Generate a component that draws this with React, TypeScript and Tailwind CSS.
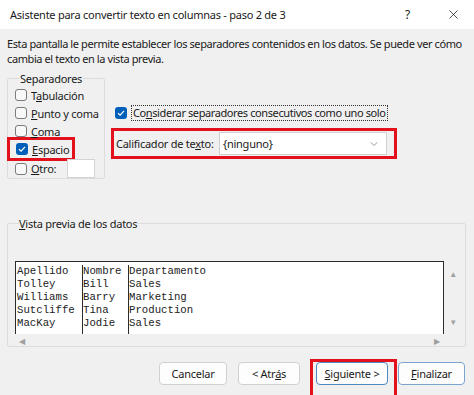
import { ChevronDown, X } from 'lucide-react';

const ui = { fontFamily: '"Segoe UI", "Noto Sans", sans-serif' };
const mono = { fontFamily: '"Liberation Mono", "Courier New", monospace' };

function Box({ checked }: { checked?: boolean }) {
  if (checked) {
    return (
      <span className="flex h-[12px] w-[12px] shrink-0 items-center justify-center rounded-[3px] bg-[#005fb8]">
        <svg width="8" height="8" viewBox="0 0 8 8" fill="none">
          <path d="M1 4.2 L3.1 6.2 L7 1.8" stroke="white" strokeWidth="1.2" />
        </svg>
      </span>
    );
  }
  return <span className="h-[12px] w-[12px] shrink-0 rounded-[3px] border border-[#7a7a7a] bg-[#f8f8f8]" />;
}

function Opt({ pre, key1, post, checked }: { pre?: string; key1: string; post: string; checked?: boolean }) {
  return (
    <div className="flex h-[18px] items-center gap-[4px]">
      <Box checked={checked} />
      <span className="whitespace-nowrap">
        {pre}
        <u>{key1}</u>
        {post}
      </span>
    </div>
  );
}

const rows = [
  ['Apellido', 'Nombre', 'Departamento'],
  ['Tolley', 'Bill', 'Sales'],
  ['Williams', 'Barry', 'Marketing'],
  ['Sutcliffe', 'Tina', 'Production'],
  ['MacKay', 'Jodie', 'Sales'],
];

export default function App() {
  return (
    <div
      className="h-[395px] w-[474px] overflow-hidden bg-[#f0f0f0] text-[11px] leading-[15px] tracking-[-0.25px] text-[#1a1a1a]"
      style={ui}
    >
      {/* Barra de título */}
      <div className="flex h-[29px] items-center bg-white pl-[10px] pr-[13px]">
        <span className="flex-1 whitespace-nowrap">Asistente para convertir texto en columnas - paso 2 de 3</span>
        <span className="mr-[36px] text-[12px]">?</span>
        <X size={15} strokeWidth={1.2} />
      </div>

      <div className="px-[7px]">
        <p className="whitespace-nowrap pt-[7px] tracking-[-0.4px]">
          Esta pantalla le permite establecer los separadores contenidos en los datos. Se puede ver cómo
          <br />
          cambia el texto en la vista previa.
        </p>

        {/* Separadores y opciones */}
        <div className="mt-[5px] flex">
          <fieldset className="h-[108px] w-[98px] rounded-[2px] border border-[#dcdcdc] pl-[7px]">
            <legend className="ml-[4px] px-[1px]">Separadores</legend>
            <Opt pre="T" key1="a" post="bulación" />
            <Opt key1="P" post="unto y coma" />
            <Opt key1="C" post="oma" />
            <div className="-my-[3px] -ml-[8px] w-[68px] border-[3px] border-[#e3111b] pl-[6px]">
              <Opt key1="E" post="spacio" checked />
            </div>
            <div className="mt-[1px] flex items-center">
              <Opt key1="O" post="tro:" />
              <span className="ml-[11px] h-[19px] w-[28px] border border-[#d4d4d4] bg-white" />
            </div>
          </fieldset>

          <div className="ml-[6px] pt-[34px]">
            <div className="ml-[4px] flex items-center gap-[4px]">
              <Box checked />
              <span className="whitespace-nowrap border border-dotted border-[#333] px-[1px] leading-[14px] tracking-[-0.4px]">
                Co<u>n</u>siderar separadores consecutivos como uno solo
              </span>
            </div>
            <div className="mt-[7px] flex h-[31px] w-[286px] items-center border-[3px] border-[#e3111b] pl-[2px]">
              <span className="w-[103px] whitespace-nowrap">
                Calificador de te<u>x</u>to:
              </span>
              <div className="flex h-[23px] w-[168px] items-center justify-between border border-[#d0d0d0] bg-white pl-[3px] pr-[6px]">
                <span>{'{ninguno}'}</span>
                <ChevronDown size={12} strokeWidth={1.2} className="text-[#555]" />
              </div>
            </div>
          </div>
        </div>

        {/* Vista previa */}
        <fieldset className="mt-[37px] h-[131px] w-[459px] rounded-[2px] border border-[#dcdcdc] pl-[7px] pt-[30px]">
          <legend className="ml-[4px]">
            <u>V</u>ista previa de los datos
          </legend>
          <div className="flex">
            <div
              className="flex h-[73px] w-[429px] overflow-hidden border border-b-0 border-[#2b2b2b] bg-white pl-[1px] pt-[3px] text-[10.7px] leading-[13px] tracking-normal text-[#222]"
              style={mono}
            >
              {[0, 1, 2].map((c) => (
                <div
                  key={c}
                  className={
                    c === 0 ? 'w-[65px]' : c === 1 ? 'w-[46px] border-l border-[#2b2b2b]' : 'flex-1 border-l border-[#2b2b2b]'
                  }
                >
                  {rows.map((r, i) => (
                    <div key={i} className="whitespace-pre">
                      {r[c]}
                    </div>
                  ))}
                </div>
              ))}
            </div>
            <div className="flex w-[18px] flex-col items-center justify-between py-[5px] text-[8px] text-[#a0a0a0]">
              <span>▲</span>
              <span>▼</span>
            </div>
          </div>
          <div className="flex w-[429px] justify-between px-[4px] pt-[1px] text-[8px] leading-[12px] text-[#a0a0a0]">
            <span>◀</span>
            <span>▶</span>
          </div>
        </fieldset>

        {/* Botones */}
        <div className="mt-[12px] flex items-start justify-end pr-[2px]">
          <button className="mt-[3px] h-[23px] w-[68px] rounded-[4px] border border-[#d0d0d0] bg-[#fdfdfd]">
            Cancelar
          </button>
          <button className="ml-[11px] mt-[3px] h-[23px] w-[62px] rounded-[4px] border border-[#d0d0d0] bg-[#fdfdfd]">
            &lt; Atr<u>á</u>s
          </button>
          <div className="ml-[10px] h-[40px] border-[3px] border-[#e3111b] pl-[3px] pr-[6px]">
            <button className="h-[23px] w-[72px] rounded-[4px] border border-[#4d88c4] bg-[#fdfdfd]">
              <u>S</u>iguiente &gt;
            </button>
          </div>
          <button className="ml-[1px] mt-[3px] h-[23px] w-[67px] rounded-[4px] border border-[#7aa4cf] bg-[#fdfdfd]">
            <u>F</u>inalizar
          </button>
        </div>
      </div>
    </div>
  );
}
